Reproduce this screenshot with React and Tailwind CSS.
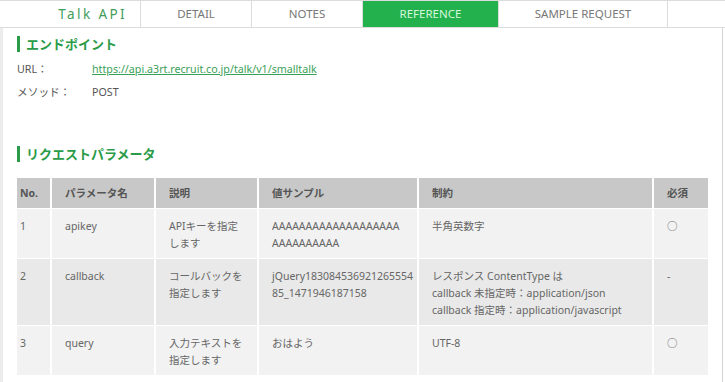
const font = { fontFamily: '"Noto Sans", "Noto Sans CJK JP", sans-serif' };

const tabs = [
  { label: 'DETAIL', w: 'w-[111px]' },
  { label: 'NOTES', w: 'w-[111px]' },
  { label: 'REFERENCE', w: 'w-[136px]', active: true },
  { label: 'SAMPLE REQUEST', w: 'w-[169px]' },
];

const rows = [
  {
    no: '1',
    name: 'apikey',
    desc: ['APIキーを指定', 'します'],
    sample: ['AAAAAAAAAAAAAAAAAAA', 'AAAAAAAAAA'],
    rule: ['半角英数字'],
    req: '○',
    bg: 'bg-[#f2f2f2]',
    h: 'h-[49px]',
  },
  {
    no: '2',
    name: 'callback',
    desc: ['コールバックを', '指定します'],
    sample: ['jQuery183084536921265554', '85_1471946187158'],
    rule: ['レスポンス ContentType は', 'callback 未指定時：application/json', 'callback 指定時：application/javascript'],
    req: '-',
    bg: 'bg-[#e9e9e9]',
    h: 'h-[66px]',
  },
  {
    no: '3',
    name: 'query',
    desc: ['入力テキストを', '指定します'],
    sample: ['おはよう'],
    rule: ['UTF-8'],
    req: '○',
    bg: 'bg-[#f2f2f2]',
    h: 'h-[49px]',
  },
];

function Heading({ children, className = '' }) {
  return (
    <div className={`flex h-[16px] items-center ${className}`}>
      <span className="h-[16px] w-[3px] bg-[#2a9b48]" />
      <span className="ml-[6px] text-[13px] font-bold leading-none text-[#2a9b48]">{children}</span>
    </div>
  );
}

function Lines({ items }) {
  return items.map((t, i) => (
    <div key={i} className="whitespace-nowrap">
      {t}
    </div>
  ));
}

export default function App() {
  return (
    <div className="h-[382px] w-[725px] overflow-hidden bg-white" style={font}>
      <nav className="flex h-[28px] border-y border-[#dcdcdc]">
        <div className="flex w-[141px] items-center justify-end border-r border-[#dcdcdc] pr-[13px] text-[13.5px] tracking-[2.4px] text-[#3f9e5c]">
          Talk API
        </div>
        {tabs.map((t) => (
          <div
            key={t.label}
            className={`flex ${t.w} items-center justify-center border-r border-[#dcdcdc] text-[11.5px] ${
              t.active ? 'bg-[#22b14c] text-[#d6f7dd]' : 'text-[#777]'
            }`}
          >
            {t.label}
          </div>
        ))}
        <div className="flex-1" />
      </nav>

      <main className="h-[354px] w-[723px] border-l-[3px] border-r border-l-[#ececec] border-r-[#d4d4d4] pl-[14px] pt-[8px]">
        <Heading>エンドポイント</Heading>
        <div className="mt-[6px] flex h-[22px] items-center text-[10.7px] text-[#555]">
          <span className="w-[75px]">URL：</span>
          <a href="#" className="text-[#3a9f58] underline">
            https://api.a3rt.recruit.co.jp/talk/v1/smalltalk
          </a>
        </div>
        <div className="mt-[1px] flex h-[22px] items-center text-[10.7px] text-[#555]">
          <span className="w-[75px]">メソッド：</span>
          <span>POST</span>
        </div>

        <Heading className="mt-[43px]">リクエストパラメータ</Heading>

        <div className="mt-[16px] grid w-[691px] grid-cols-[33px_102px_101px_158px_233px_54px] gap-x-[2px] gap-y-[1px] text-[10.5px] leading-[17px] text-[#666]">
          {['No.', 'パラメータ名', '説明', '値サンプル', '制約', '必須'].map((h, i) => (
            <div
              key={h}
              className={`flex h-[30px] items-center bg-[#c8c8c8] font-bold text-[#555] ${i === 0 ? 'pl-[3px]' : 'pl-[13px]'}`}
            >
              {h}
            </div>
          ))}
          {rows.map((r) => (
            <div key={r.no} className="contents">
              <div className={`${r.bg} ${r.h} pl-[3px] pt-[9px]`}>{r.no}</div>
              <div className={`${r.bg} pl-[13px] pt-[9px]`}>{r.name}</div>
              <div className={`${r.bg} pl-[13px] pt-[9px]`}>
                <Lines items={r.desc} />
              </div>
              <div className={`${r.bg} pl-[13px] pt-[9px]`}>
                <Lines items={r.sample} />
              </div>
              <div className={`${r.bg} pl-[13px] pt-[9px]`}>
                <Lines items={r.rule} />
              </div>
              <div className={`${r.bg} pl-[13px] pt-[9px]`}>{r.req}</div>
            </div>
          ))}
        </div>
      </main>
    </div>
  );
}
